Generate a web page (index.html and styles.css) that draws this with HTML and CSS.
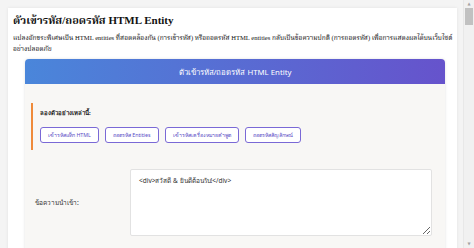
FILE: index.html
```html
<!DOCTYPE html>
<html lang="th">
<head>
<meta charset="utf-8">
<title>ตัวเข้ารหัส/ถอดรหัส HTML Entity</title>
<link rel="stylesheet" href="styles.css">
</head>
<body>
<div class="viewport">
  <div class="page">
    <h1 class="title">ตัวเข้ารหัส/ถอดรหัส HTML Entity</h1>
    <p class="intro">แปลงอักขระพิเศษเป็น HTML entities ที่สอดคล้องกัน (การเข้ารหัส) หรือถอดรหัส HTML entities กลับเป็นข้อความปกติ (การถอดรหัส) เพื่อการแสดงผลได้บนเว็บไซต์อย่างปลอดภัย</p>
    <div class="card">
      <div class="card-header">ตัวเข้ารหัส/ถอดรหัส HTML Entity</div>
      <div class="card-body">
        <div class="examples">
          <div class="examples-title">ลองตัวอย่างเหล่านี้:</div>
          <div class="btn-row">
            <button class="btn">เข้ารหัสแท็ก HTML</button>
            <button class="btn">ถอดรหัส Entities</button>
            <button class="btn">เข้ารหัสเครื่องหมายคำพูด</button>
            <button class="btn">ถอดรหัสสัญลักษณ์</button>
          </div>
        </div>
        <div class="form-row">
          <label class="form-label" for="inp">ข้อความนำเข้า:</label>
          <textarea id="inp" class="form-input">&lt;div&gt;สวัสดี &amp; ยินดีต้อนรับ!&lt;/div&gt;</textarea>
        </div>
      </div>
    </div>
  </div>
</div>
<div class="scrollbar">
  <div class="sb-arrow">&#9650;</div>
  <div class="sb-track"><div class="sb-thumb"></div></div>
  <div class="sb-arrow">&#9660;</div>
</div>
</body>
</html>
```
FILE: styles.css
```css
html, body {
  margin: 0;
  padding: 0;
  height: 248px;
  overflow: hidden;
}
body {
  display: flex;
  background: #f4f4f4;
  font-family: "Liberation Serif", "Noto Serif Thai", "Noto Sans Thai", serif;
  color: #111;
}
.viewport {
  flex: 1;
  height: 248px;
  overflow: hidden;
}
.page {
  background: #fff;
  margin: 8px 6px 0 8px;
  padding: 4px 2px 20px 5px;
  box-shadow: 0 0 3px rgba(0, 0, 0, 0.08);
}
.title {
  font-size: 11px;
  line-height: 16px;
  font-weight: bold;
  margin: 0 0 4px;
}
.intro {
  font-size: 6.6px;
  line-height: 11px;
  margin: 0 0 5px;
}
.card {
  margin-left: 12px;
  width: 420px;
  border-radius: 4px;
  overflow: hidden;
  box-shadow: 0 0 3px rgba(0, 0, 0, 0.12);
  font-family: "Noto Sans", "Liberation Sans", sans-serif;
}
.card-header {
  height: 25px;
  display: flex;
  align-items: center;
  justify-content: center;
  background: linear-gradient(90deg, #4a86da, #6653cc);
  color: #fff;
  font-size: 7.8px;
}
.card-body {
  background: #f8f7f5;
  padding: 19px 6px 30px 6px;
}
.examples {
  border-left: 2px solid #ef8a3a;
  padding: 6px 9px 7px 7px;
}
.examples-title {
  font-size: 6px;
  line-height: 9px;
  font-weight: bold;
  color: #222;
  margin-bottom: 9px;
}
.btn-row {
  display: flex;
  gap: 6px;
}
.btn {
  height: 16px;
  padding: 0 7px;
  background: #fff;
  border: 1px solid #7a69d6;
  border-radius: 3px;
  color: #5a4dc6;
  font-family: "Noto Sans", "Liberation Sans", sans-serif;
  font-size: 5.3px;
}
.form-row {
  display: flex;
  align-items: center;
  margin-top: 19px;
  padding-left: 4px;
}
.form-label {
  width: 95px;
  font-size: 6.5px;
  color: #333;
}
.form-input {
  width: 302px;
  height: 67px;
  box-sizing: border-box;
  padding: 6px 8px;
  border: 1px solid #e2e2e2;
  border-radius: 2px;
  background: #fff;
  font-family: "Noto Sans", "Liberation Sans", sans-serif;
  font-size: 6.5px;
  color: #333;
  resize: vertical;
}
.scrollbar {
  width: 11px;
  height: 248px;
  display: flex;
  flex-direction: column;
  background: #f1f1f1;
  border-left: 1px solid #e8e8e8;
  box-sizing: border-box;
}
.sb-arrow {
  height: 8px;
  font-size: 4px;
  line-height: 8px;
  text-align: center;
  color: #a3a3a3;
  font-family: "DejaVu Sans", sans-serif;
}
.sb-track {
  flex: 1;
  padding: 0 1px;
}
.sb-thumb {
  height: 17px;
  background: #c1c1c1;
}
```
